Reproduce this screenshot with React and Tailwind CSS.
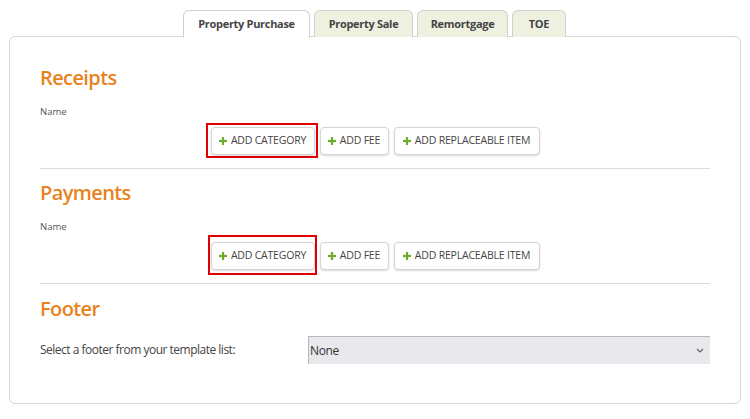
import React from "react";

const font = { fontFamily: '"Open Sans", "Noto Sans", sans-serif' };

function Plus() {
  return (
    <svg width="8" height="8" viewBox="0 0 8 8" className="shrink-0">
      <rect x="2.9" y="0" width="2.2" height="8" fill="#6aad2a" />
      <rect x="0" y="2.9" width="8" height="2.2" fill="#6aad2a" />
    </svg>
  );
}

function Btn({ label, w, red, redCls }) {
  return (
    <div className="relative">
      {red && <div className={`absolute border-2 border-[#e00000] ${redCls}`} />}
      <button
        className={`relative h-[28px] ${w} flex items-center justify-center gap-[4px] rounded-[4px] border border-[#d4d4d4] bg-white text-[10.5px] text-[#444] tracking-[-0.2px] shadow-[0_1px_2px_rgba(0,0,0,0.15)]`}
      >
        <Plus />
        <span>{label}</span>
      </button>
    </div>
  );
}

function Section({ title, redCls }) {
  return (
    <>
      <h2 className="h-[24px] leading-[24px] text-[20px] font-semibold text-[#e8831c] tracking-[-0.6px]">{title}</h2>
      <div className="mt-[16px] h-[12px] leading-[12px] text-[9.5px] text-[#555]">Name</div>
      <div className="mt-[9px] flex justify-center gap-[5px]">
        <Btn label="ADD CATEGORY" w="w-[104px]" red redCls={redCls} />
        <Btn label="ADD FEE" w="w-[69px]" />
        <Btn label="ADD REPLACEABLE ITEM" w="w-[146px]" />
      </div>
      <div className="mt-[13px] h-px bg-[#dcdcdc]" />
    </>
  );
}

export default function App() {
  const tabs = [
    { t: "Property Purchase", w: "w-[127px]", active: true },
    { t: "Property Sale", w: "w-[99px]" },
    { t: "Remortgage", w: "w-[91px]" },
    { t: "TOE", w: "w-[54px]" },
  ];
  return (
    <div className="w-[750px] h-[419px] bg-white pt-[10px]" style={font}>
      <div className="flex pl-[183px] gap-[4px] relative z-10">
        {tabs.map((tb) => (
          <div
            key={tb.t}
            className={`${tb.w} h-[27px] flex items-center justify-center rounded-t-[6px] border border-[#cfcfcf] text-[11px] font-bold text-[#444] tracking-[-0.3px] ${
              tb.active ? "bg-white border-b-white h-[28px] -mb-px" : "bg-[#eef1e0] border-b-0 mb-0 self-start"
            }`}
          >
            {tb.t}
          </div>
        ))}
      </div>
      <div className="mx-[9px] -mt-px h-[368px] rounded-[6px] border border-[#d6d6d6] pl-[30px] pr-[30px] pt-[29px]">
        <Section title="Receipts" redCls="-left-[5px] -right-[3px] -top-[4px] -bottom-[3px]" />
        <div className="mt-[12px]" />
        <Section title="Payments" redCls="-left-[3px] -right-[2px] -top-[7px] -bottom-[5px]" />
        <h2 className="mt-[13px] h-[24px] leading-[24px] text-[20px] font-semibold text-[#e8831c] tracking-[-0.6px]">Footer</h2>
        <div className="mt-[15px] flex items-center">
          <div className="w-[268px] text-[12px] text-[#444] tracking-[-0.5px]">Select a footer from your template list:</div>
          <div className="flex-1 h-[28px] bg-[#e8e8ed] border-t border-l border-[#b8b8b8] flex items-center justify-between pl-[1px] pr-[6px]">
            <span className="text-[12px] text-[#333] tracking-[-0.4px]">None</span>
            <svg width="8" height="5" viewBox="0 0 8 5">
              <path d="M1 1l3 3 3-3" fill="none" stroke="#666" strokeWidth="1.2" />
            </svg>
          </div>
        </div>
      </div>
    </div>
  );
}
